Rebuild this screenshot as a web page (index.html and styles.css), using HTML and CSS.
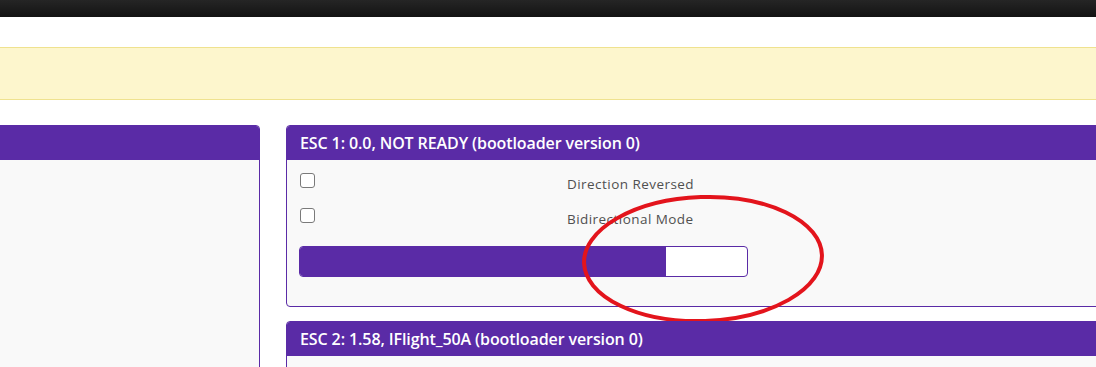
FILE: index.html
```html
<!DOCTYPE html>
<html>
<head>
    <title>ESC Configurator</title>
    <link rel="stylesheet" href="styles.css">
</head>
<body>
    <div class="topbar"></div>

    <div class="alert"></div>

    <div class="content">
        <div class="panel side-panel">
            <div class="panel-header"></div>
            <div class="panel-body"></div>
        </div>

        <div class="escs">
            <div class="panel esc">
                <div class="panel-header">ESC 1: 0.0, NOT READY (bootloader version 0)</div>
                <div class="panel-body">
                    <div class="option">
                        <input type="checkbox" class="checkbox">
                        <span class="label">Direction Reversed</span>
                    </div>
                    <div class="option">
                        <input type="checkbox" class="checkbox">
                        <span class="label">Bidirectional Mode</span>
                    </div>
                    <div class="progress">
                        <div class="progress-fill" style="width: 81.9%"></div>
                    </div>
                </div>
                <svg class="mark" width="250" height="136" viewBox="0 0 250 136">
                    <ellipse cx="124" cy="67" rx="119" ry="62" fill="none" stroke="#e3141c" stroke-width="4" transform="rotate(-2 124 67)"/>
                </svg>
            </div>

            <div class="panel esc">
                <div class="panel-header">ESC 2: 1.58, IFlight_50A (bootloader version 0)</div>
                <div class="panel-body"></div>
            </div>
        </div>
    </div>
</body>
</html>
```

FILE: styles.css
```css
html, body {
    margin: 0;
    overflow: hidden;
}

body {
    font-family: "Open Sans", "Liberation Sans", sans-serif;
    background-color: #ffffff;
}

.topbar {
    height: 17px;
    background: linear-gradient(#252525, #131313);
}

.alert {
    margin-top: 30px;
    height: 51px;
    background-color: #fdf6cd;
    border-top: 1px solid #efe28f;
    border-bottom: 1px solid #efe28f;
}

.content {
    display: flex;
    gap: 26px;
    margin-top: 25px;
    margin-left: -30px;
    width: 1160px;
}

.panel {
    border: 1px solid #5a2ba6;
    border-radius: 4px;
    background-color: #f9f9f9;
    overflow: hidden;
}

.panel-header {
    height: 34px;
    background-color: #5a2ba6;
    color: #ffffff;
    font-size: 16px;
    font-weight: 600;
    line-height: 34px;
    padding-left: 13px;
    letter-spacing: -0.1px;
}

.side-panel {
    width: 288px;
    height: 300px;
    flex-shrink: 0;
}

.escs {
    flex: 1;
    display: flex;
    flex-direction: column;
    gap: 14px;
}

.esc {
    position: relative;
    overflow: visible;
}

.esc .panel-header {
    border-radius: 3px 3px 0 0;
}

.esc .panel-body {
    padding: 6px 12px 29px 12px;
    min-height: 60px;
}

.option {
    display: grid;
    grid-template-columns: 268px auto;
    align-items: center;
    height: 35px;
}

.checkbox {
    appearance: none;
    width: 15px;
    height: 15px;
    margin: 0 0 0 1px;
    border: 1.5px solid #7a7a7a;
    border-radius: 3px;
    background-color: #ffffff;
    position: relative;
    top: -3px;
}

.label {
    font-size: 13.5px;
    color: #505050;
    letter-spacing: 0.45px;
}

.progress {
    width: 447px;
    height: 29px;
    margin-top: 10px;
    border: 1px solid #5a2ba6;
    border-radius: 4px;
    background-color: #ffffff;
    overflow: hidden;
}

.progress-fill {
    height: 100%;
    background-color: #5a2ba6;
}

.mark {
    position: absolute;
    left: 292px;
    top: 66px;
}
```
